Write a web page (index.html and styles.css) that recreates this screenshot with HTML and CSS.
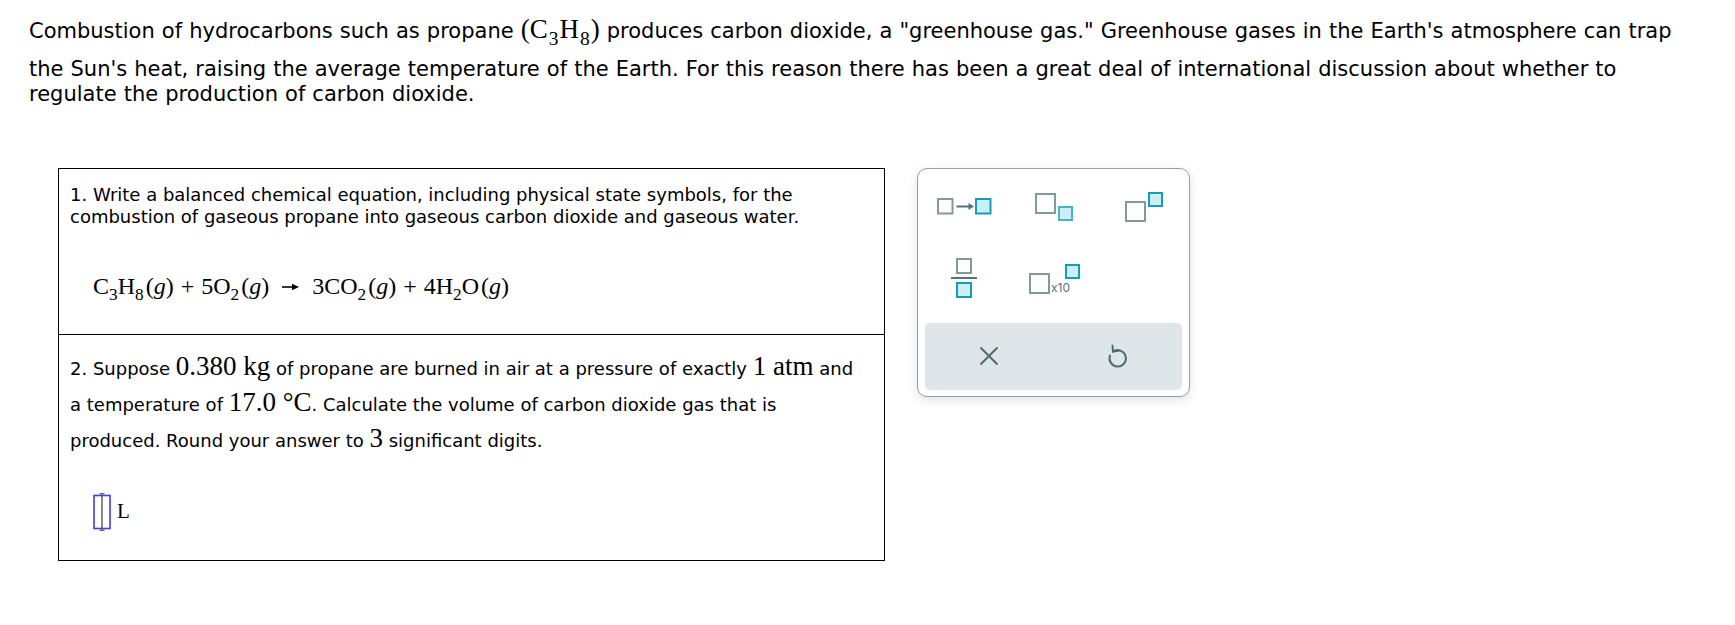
FILE: index.html
```html
<!DOCTYPE html>
<html>
<head>
<meta charset="utf-8">
<link rel="stylesheet" href="styles.css">
</head>
<body>
<div class="page">
  <p class="intro">Combustion of hydrocarbons such as propane <span class="m m-intro">(C<sub>3</sub>H<sub>8</sub>)</span> produces carbon dioxide, a "greenhouse gas." Greenhouse gases in the Earth's atmosphere can trap<br>the Sun's heat, raising the average temperature of the Earth. For this reason there has been a great deal of international discussion about whether to<br>regulate the production of carbon dioxide.</p>

  <div class="work">
    <div class="qbox">
      <section class="q1">
        <p class="qtext">1. Write a balanced chemical equation, including physical state symbols, for the<br>combustion of gaseous propane into gaseous carbon dioxide and gaseous water.</p>
        <div class="eq">C<sub>3</sub>H<sub>8</sub><span class="st">(<i>g</i>)</span><span class="op">+</span>5O<sub>2</sub><span class="st">(<i>g</i>)</span><span class="arrow"><svg width="17" height="8" viewBox="0 0 17 8"><path d="M0 4H11" stroke="#000" stroke-width="1.6"/><path d="M10 0.8L17 4L10 7.2Z" fill="#000"/></svg></span>3CO<sub>2</sub><span class="st">(<i>g</i>)</span><span class="op">+</span>4H<sub>2</sub>O<span class="st">(<i>g</i>)</span></div>
      </section>
      <section class="q2">
        <p class="qtext2">2. Suppose <span class="mv">0.380 kg</span> of propane are burned in air at a pressure of exactly <span class="mv">1 atm</span> and<br>a temperature of <span class="mv">17.0 °C</span>. Calculate the volume of carbon dioxide gas that is<br>produced. Round your answer to <span class="mv">3</span> significant digits.</p>
        <div class="answer">
          <svg class="ansbox" width="18" height="38" viewBox="0 0 18 38">
            <rect x="1" y="2.5" width="16" height="33" fill="#fff" stroke="#3b3bf5" stroke-width="1.6"/>
            <path d="M9 0.5V37.5" stroke="#555" stroke-width="1.4"/>
            <path d="M6.5 0.7H11.5M6.5 37.3H11.5" stroke="#666" stroke-width="1.2"/>
          </svg>
          <span class="unit">L</span>
        </div>
      </section>
    </div>

    <div class="panel">
      <div class="tools">
        <div class="tool">
          <svg width="55" height="17" viewBox="0 0 55 17">
            <rect x="1" y="1" width="14.5" height="14.5" fill="#fff" stroke="#8399a2" stroke-width="2"/>
            <path d="M19.5 8.5H33" stroke="#56727d" stroke-width="2"/>
            <path d="M31.5 5L37 8.5L31.5 12Z" fill="#56727d"/>
            <rect x="39" y="1" width="14.5" height="14.5" fill="#cdeef4" stroke="#109fb5" stroke-width="2"/>
          </svg>
        </div>
        <div class="tool">
          <svg width="38" height="28" viewBox="0 0 38 28">
            <rect x="1" y="1" width="19" height="19" fill="#fff" stroke="#8399a2" stroke-width="2"/>
            <rect x="24" y="14" width="13" height="13" fill="#cdeef4" stroke="#45b6c8" stroke-width="2"/>
          </svg>
        </div>
        <div class="tool">
          <svg width="38" height="30" viewBox="0 0 38 30">
            <rect x="1" y="10" width="19" height="19" fill="#fff" stroke="#8399a2" stroke-width="2"/>
            <rect x="24" y="1" width="13" height="13" fill="#cdeef4" stroke="#109fb5" stroke-width="2"/>
          </svg>
        </div>
        <div class="tool">
          <svg width="26" height="41" viewBox="0 0 26 41">
            <rect x="6" y="1" width="14" height="14" fill="#fff" stroke="#8399a2" stroke-width="2"/>
            <path d="M0 20H26" stroke="#56727d" stroke-width="2"/>
            <rect x="6" y="25" width="14" height="14" fill="#cdeef4" stroke="#109fb5" stroke-width="2"/>
          </svg>
        </div>
        <div class="tool">
          <svg width="51" height="30" viewBox="0 0 51 30">
            <rect x="1" y="10" width="19" height="19" fill="#fff" stroke="#8399a2" stroke-width="2"/>
            <text x="22" y="27.5" font-size="12" fill="#56727d" font-family="Inter, Roboto, sans-serif">x10</text>
            <rect x="37" y="1" width="13" height="13" fill="#cdeef4" stroke="#109fb5" stroke-width="2"/>
          </svg>
        </div>
        <div class="tool"></div>
      </div>
      <div class="actions">
        <div class="act">
          <svg width="20" height="20" viewBox="0 0 20 20"><path d="M1.5 1.5L18.5 18.5M18.5 1.5L1.5 18.5" stroke="#4d6a75" stroke-width="2" fill="none"/></svg>
        </div>
        <div class="act">
          <svg width="22" height="26" viewBox="0 0 22 26"><path d="M6 8.6A8.2 8.2 0 1 1 3 12.5" stroke="#4d6a75" stroke-width="2" fill="none" stroke-linecap="round"/><path d="M5.5 2.5L6 8.6L11.5 7.8" stroke="#4d6a75" stroke-width="2" fill="none" stroke-linecap="round" stroke-linejoin="round"/></svg>
        </div>
      </div>
    </div>
  </div>
</div>
</body>
</html>
```

FILE: styles.css
```css
* { box-sizing: border-box; }
html, body { margin: 0; background: #fff; }
body { font-family: "DejaVu Sans", Verdana, sans-serif; color: #000; }

.page { padding: 17px 0 0 29px; }

.intro { margin: 0; font-size: 21px; line-height: 25.5px; white-space: nowrap; word-spacing: 0.4px; }
.m { font-family: "Liberation Serif", "Times New Roman", serif; word-spacing: 0; }
.m-intro { display: inline-block; font-size: 27px; line-height: 25.5px; padding-bottom: 14px; }
sub { font-size: 0.72em; line-height: 0; vertical-align: -0.3em; }
.m-intro sub { vertical-align: -0.38em; margin: 0 1px; }

.work { display: flex; align-items: flex-start; gap: 32px; margin: 60px 0 0 29px; }

.qbox { width: 827px; border: 1px solid #000; }
.q1 { height: 166px; padding: 15px 11px 0; border-bottom: 1px solid #000; }
.qtext { margin: 0; font-size: 18px; line-height: 22px; white-space: nowrap; }
.eq { margin: 38px 0 0 23px; font-family: "Liberation Serif", "Times New Roman", serif; font-size: 24px; line-height: 40px; white-space: nowrap; }
.eq sub { vertical-align: -0.35em; }
.eq .st { margin-left: 2px; }
.eq .op { margin: 0 7px; }
.eq .arrow { display: inline-block; margin: 0 13px; vertical-align: 3px; }
.eq .arrow svg { display: block; }

.q2 { height: 225px; padding: 16px 11px 0; }
.qtext2 { margin: 0; font-size: 18px; line-height: 36px; white-space: nowrap; }
.mv { font-family: "Liberation Serif", "Times New Roman", serif; font-size: 27px; line-height: 18px; }
.answer { display: flex; align-items: center; gap: 6px; margin: 34px 0 0 23px; }
.ansbox { display: block; }
.unit { font-family: "Liberation Serif", "Times New Roman", serif; font-size: 21px; }

.panel { width: 273px; border: 1px solid #8ea2aa; border-radius: 10px; padding: 2px 7px 6px; background: #fff; box-shadow: 0 3px 10px rgba(40, 60, 70, 0.15); }
.tools { display: grid; grid-template-columns: 78px 102px 1fr; grid-template-rows: 72px 72px; }
.tool { display: flex; align-items: center; justify-content: center; }
.tool svg, .act svg { display: block; }
.actions { margin-top: 8px; height: 67px; background: #dfe6e9; border-radius: 5px; display: grid; grid-template-columns: 1fr 1fr; }
.act { display: flex; align-items: center; justify-content: center; }
```
